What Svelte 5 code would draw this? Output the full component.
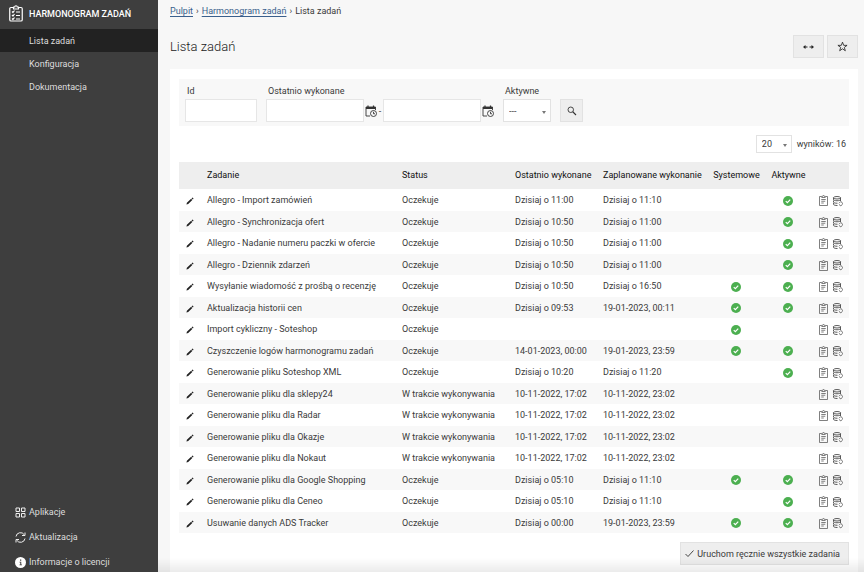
<script>
  const rows = [
    { name: 'Allegro - Import zamówień', status: 'Oczekuje', last: 'Dzisiaj o 11:00', next: 'Dzisiaj o 11:10', system: false, active: true },
    { name: 'Allegro - Synchronizacja ofert', status: 'Oczekuje', last: 'Dzisiaj o 10:50', next: 'Dzisiaj o 11:00', system: false, active: true },
    { name: 'Allegro - Nadanie numeru paczki w ofercie', status: 'Oczekuje', last: 'Dzisiaj o 10:50', next: 'Dzisiaj o 11:00', system: false, active: true },
    { name: 'Allegro - Dziennik zdarzeń', status: 'Oczekuje', last: 'Dzisiaj o 10:50', next: 'Dzisiaj o 11:00', system: false, active: true },
    { name: 'Wysyłanie wiadomość z prośbą o recenzję', status: 'Oczekuje', last: 'Dzisiaj o 10:50', next: 'Dzisiaj o 16:50', system: true, active: true },
    { name: 'Aktualizacja historii cen', status: 'Oczekuje', last: 'Dzisiaj o 09:53', next: '19-01-2023, 00:11', system: true, active: true },
    { name: 'Import cykliczny - Soteshop', status: 'Oczekuje', last: '', next: '', system: true, active: false },
    { name: 'Czyszczenie logów harmonogramu zadań', status: 'Oczekuje', last: '14-01-2023, 00:00', next: '19-01-2023, 23:59', system: true, active: true },
    { name: 'Generowanie pliku Soteshop XML', status: 'Oczekuje', last: 'Dzisiaj o 10:20', next: 'Dzisiaj o 11:20', system: false, active: true },
    { name: 'Generowanie pliku dla sklepy24', status: 'W trakcie wykonywania', last: '10-11-2022, 17:02', next: '10-11-2022, 23:02', system: false, active: false },
    { name: 'Generowanie pliku dla Radar', status: 'W trakcie wykonywania', last: '10-11-2022, 17:02', next: '10-11-2022, 23:02', system: false, active: false },
    { name: 'Generowanie pliku dla Okazje', status: 'W trakcie wykonywania', last: '10-11-2022, 17:02', next: '10-11-2022, 23:02', system: false, active: false },
    { name: 'Generowanie pliku dla Nokaut', status: 'W trakcie wykonywania', last: '10-11-2022, 17:02', next: '10-11-2022, 23:02', system: false, active: false },
    { name: 'Generowanie pliku dla Google Shopping', status: 'Oczekuje', last: 'Dzisiaj o 05:10', next: 'Dzisiaj o 11:10', system: true, active: true },
    { name: 'Generowanie pliku dla Ceneo', status: 'Oczekuje', last: 'Dzisiaj o 05:10', next: 'Dzisiaj o 11:10', system: false, active: true },
    { name: 'Usuwanie danych ADS Tracker', status: 'Oczekuje', last: 'Dzisiaj o 00:00', next: '19-01-2023, 23:59', system: true, active: true }
  ];

  let perPage = $state('20');
  let active = $state('');
</script>

{#snippet check()}
  <svg class="check" viewBox="0 0 20 20" role="img" aria-label="Tak">
    <circle cx="10" cy="10" r="10" fill="#4caf50" />
    <path d="M5.5 10.3l3.2 3.1 5.8-6" fill="none" stroke="#fff" stroke-width="2.4" />
  </svg>
{/snippet}

{#snippet calendar()}
  <svg class="calendar" viewBox="0 0 24 24" fill="none" stroke="#333" stroke-width="1.8" aria-hidden="true">
    <path d="M10 22H2V4h19v6" />
    <path d="M2 4h19v4H2z" fill="#333" stroke="none" />
    <path d="M6 1v4M17 1v4" stroke-width="2.5" />
    <circle cx="17" cy="17" r="6" />
    <path d="M17 13.5v4h3" />
  </svg>
{/snippet}

<div class="layout">
  <aside class="sidebar">
    <div class="brand">
      <svg viewBox="0 0 28 34" fill="none" stroke="#fff" stroke-width="2.4" stroke-linejoin="round" aria-hidden="true">
        <path d="M8 5H4a2.500 2.500 0 0 0-2.500 2.500v22A2.500 2.500 0 0 0 4 32h20a2.500 2.500 0 0 0 2.500-2.500v-22A2.500 2.500 0 0 0 24 5h-4" />
        <path d="M9 8V4h2.500a2.500 2.500 0 0 1 5 0H19v4z" />
        <path d="M6 13l2 2 3-4M14 14h8M6 20l2 2 3-4M14 21h8M6 27l2 2 3-4M14 28h8" />
      </svg>
      <span>HARMONOGRAM ZADAŃ</span>
    </div>
    <nav class="menu">
      <a href="#lista" class="active">Lista zadań</a>
      <a href="#konfiguracja">Konfiguracja</a>
      <a href="#dokumentacja">Dokumentacja</a>
    </nav>
    <nav class="menu-bottom">
      <a href="#aplikacje">
        <svg viewBox="0 0 22 22" fill="none" stroke="#eee" stroke-width="2" aria-hidden="true">
          <path d="M2 2h7v7H2zM13 2h7v7h-7zM2 13h7v7H2zM13 13h7v7h-7z" />
        </svg>
        Aplikacje
      </a>
      <a href="#aktualizacja">
        <svg viewBox="0 0 22 22" fill="none" stroke="#eee" stroke-width="2" aria-hidden="true">
          <path d="M2 9a9 9 0 0 1 16.500-3.500M20 13a9 9 0 0 1-16.500 3.500" />
          <path d="M20 1v6h-6M2 21v-6h6" />
        </svg>
        Aktualizacja
      </a>
      <a href="#licencja">
        <svg viewBox="0 0 22 22" aria-hidden="true">
          <circle cx="11" cy="11" r="11" fill="#fff" />
          <path d="M10 5h2.500v2.500H10zM9 9.500h3.500V15H14v1.500H9V15h1.500v-4H9z" fill="#444" />
        </svg>
        Informacje o licencji
      </a>
    </nav>
  </aside>

  <main>
    <nav class="breadcrumbs">
      <a href="#pulpit">Pulpit</a>
      <span>›</span>
      <a href="#harmonogram">Harmonogram zadań</a>
      <span>›</span>
      <span>Lista zadań</span>
    </nav>

    <header class="page-header">
      <h1>Lista zadań</h1>
      <div class="actions">
        <button type="button" class="btn" aria-label="Szerokość">
          <svg class="arrows" viewBox="0 0 22 12" aria-hidden="true">
            <path d="M3 6h6M13 6h6" stroke="#222" stroke-width="2" />
            <path d="M0 6l5-4v8zM22 6l-5-4v8z" fill="#222" />
          </svg>
        </button>
        <button type="button" class="btn" aria-label="Ulubione">
          <svg class="star" viewBox="0 0 24 24" fill="none" stroke="#222" stroke-width="1.800" aria-hidden="true">
            <path d="M12 2.500l2.600 7H22l-6 4.500 2.200 7.300L12 17l-6.200 4.300L8 14 2 9.500h7.400z" />
          </svg>
        </button>
      </div>
    </header>

    <section class="panel">
      <form class="filters">
        <div class="field field-id">
          <label for="filter-id">Id</label>
          <input id="filter-id" type="text" />
        </div>
        <div class="field">
          <label for="filter-from">Ostatnio wykonane</label>
          <div class="range">
            <input id="filter-from" type="text" />
            {@render calendar()}
            <span class="dash">-</span>
            <input type="text" aria-label="Ostatnio wykonane do" />
            {@render calendar()}
          </div>
        </div>
        <div class="field">
          <label for="filter-active">Aktywne</label>
          <div class="select">
            <select id="filter-active" bind:value={active}>
              <option value="">---</option>
              <option value="1">Tak</option>
              <option value="0">Nie</option>
            </select>
          </div>
        </div>
        <button type="button" class="btn search" aria-label="Szukaj">
          <svg viewBox="0 0 20 20" fill="none" stroke="#333" stroke-width="1.800" aria-hidden="true">
            <circle cx="7.500" cy="7.500" r="5.500" />
            <path d="M11.500 11.500L18 18" stroke-width="2.200" />
          </svg>
        </button>
      </form>

      <div class="pager">
        <div class="select">
          <select bind:value={perPage} aria-label="Wyników na stronie">
            <option>20</option>
            <option>50</option>
            <option>100</option>
          </select>
        </div>
        <span>wyników: {rows.length}</span>
      </div>

      <table>
        <colgroup>
          <col class="col-edit" />
          <col />
          <col class="col-status" />
          <col class="col-last" />
          <col class="col-next" />
          <col class="col-system" />
          <col class="col-active" />
          <col class="col-tools" />
        </colgroup>
        <thead>
          <tr>
            <th></th>
            <th>Zadanie</th>
            <th>Status</th>
            <th>Ostatnio wykonane</th>
            <th>Zaplanowane wykonanie</th>
            <th class="center">Systemowe</th>
            <th class="center">Aktywne</th>
            <th></th>
          </tr>
        </thead>
        <tbody>
          {#each rows as row}
            <tr>
              <td>
                <button type="button" class="icon-btn edit" aria-label="Edytuj">
                  <svg viewBox="0 0 18 18" fill="#222" aria-hidden="true">
                    <path d="M1 17l1-4L11.500 4l2.700 2.700L5 16zM12.500 3L14.500 1l2.700 2.700-2 2z" />
                  </svg>
                </button>
              </td>
              <td>{row.name}</td>
              <td>{row.status}</td>
              <td>{row.last}</td>
              <td>{row.next}</td>
              <td class="center">
                {#if row.system}{@render check()}{/if}
              </td>
              <td class="center">
                {#if row.active}{@render check()}{/if}
              </td>
              <td>
                <div class="tools">
                  <button type="button" class="icon-btn log" aria-label="Dziennik">
                    <svg viewBox="0 0 18 22" fill="none" stroke="#555" stroke-width="1.500" aria-hidden="true">
                      <path d="M5 3H1v18h16V3h-4" />
                      <path d="M5.500 5V2.500h2a1.500 1.500 0 0 1 3 0h2V5z" />
                      <path d="M4.500 9h9M4.500 12.500h8M4.500 16h5" />
                    </svg>
                  </button>
                  <button type="button" class="icon-btn db" aria-label="Dane">
                    <svg viewBox="0 0 20 20" fill="none" stroke="#333" stroke-width="1.600" aria-hidden="true">
                      <ellipse cx="8" cy="3.500" rx="7" ry="2.500" />
                      <path d="M1 3.500V7c0 1.500 3 2.500 7 2.500s7-1 7-2.500V3.500M1 9v3c0 1.500 3 2.500 8 2.500M1 14v2.500C1 18 4 19 9 19M15 7v3" />
                      <path d="M12 14.500l3.500-3.500 4 3.500-1 1M19 17l-3.500 2.500L12 17" stroke-width="1.400" />
                    </svg>
                  </button>
                </div>
              </td>
            </tr>
          {/each}
        </tbody>
      </table>

      <div class="panel-footer">
        <button type="button" class="btn run">
          <svg viewBox="0 0 18 14" fill="none" stroke="#333" stroke-width="1.800" aria-hidden="true">
            <path d="M1 8l5 5L17 1" />
          </svg>
          Uruchom ręcznie wszystkie zadania
        </button>
      </div>
    </section>
  </main>
  <div class="page-shade"></div>
</div>

<style>
  :global(body) {
    background: #f7f7f7;
  }

  .layout {
    display: flex;
    min-height: 100vh;
    font-family: Roboto, 'Noto Sans', sans-serif;
    font-size: 9px;
    line-height: 12px;
    color: #3a3a3a;
  }

  .layout * {
    box-sizing: border-box;
  }

  .sidebar {
    display: flex;
    flex-direction: column;
    flex: 0 0 158px;
    background: #3e3e3e;
    color: #fff;
  }

  .brand {
    display: flex;
    align-items: center;
    gap: 6px;
    height: 29px;
    padding: 0 9px 2px;
    font-weight: 500;
  }

  .brand svg {
    width: 14px;
    height: 17px;
  }

  .menu a {
    display: block;
    padding: 1px 29px 0;
    line-height: 22px;
    color: #ddd;
    text-decoration: none;
  }

  .menu a.active {
    background: #222;
  }

  .menu-bottom {
    display: flex;
    flex-direction: column;
    gap: 13px;
    margin-top: auto;
    padding: 0 15px 4px;
  }

  .menu-bottom a {
    display: flex;
    align-items: center;
    gap: 3px;
    color: #ddd;
    text-decoration: none;
  }

  .menu-bottom svg {
    width: 11px;
    height: 11px;
  }

  main {
    flex: 1;
    min-width: 0;
    padding: 5px 6px 0 12px;
  }

  .breadcrumbs {
    display: flex;
    gap: 3px;
  }

  .breadcrumbs a {
    color: #3a5f8c;
    text-underline-offset: 2px;
  }

  .page-header {
    display: flex;
    align-items: center;
    justify-content: space-between;
    padding: 18px 0 11px;
  }

  h1 {
    margin: 0;
    font-size: 13px;
    line-height: 16px;
    font-weight: 300;
    color: #222;
  }

  .actions {
    display: flex;
    gap: 3px;
  }

  .btn {
    display: flex;
    align-items: center;
    justify-content: center;
    padding: 0;
    font: inherit;
    color: #3a3a3a;
    background: #eee;
    border: 1px solid #e2e2e2;
    cursor: pointer;
  }

  .actions .btn {
    width: 31px;
    height: 23px;
  }

  .arrows {
    width: 11px;
    height: 6px;
  }

  .star {
    width: 11px;
    height: 11px;
  }

  .panel {
    padding: 10px 9px 7px;
    background: #fff;
  }

  .filters {
    display: flex;
    align-items: flex-end;
    gap: 9px;
    padding: 6px 6px 4px;
    background: #f8f8f8;
  }

  .field {
    display: flex;
    flex-direction: column;
    gap: 2px;
  }

  label {
    padding-left: 2px;
  }

  .field input {
    height: 23px;
    min-width: 0;
    padding: 0 6px;
    font: inherit;
    border: 1px solid #e6e6e6;
    background: #fff;
  }

  .field-id {
    width: 72px;
  }

  .range {
    display: flex;
    align-items: center;
  }

  .range input {
    width: 98px;
  }

  .calendar {
    width: 12px;
    height: 12px;
    margin-left: 1px;
  }

  .dash {
    width: 6px;
    text-align: center;
  }

  .select {
    position: relative;
  }

  .select::after {
    content: '';
    position: absolute;
    right: 5px;
    top: 50%;
    border: 2px solid transparent;
    border-top: 3px solid #777;
    pointer-events: none;
  }

  select {
    display: block;
    appearance: none;
    width: 48px;
    height: 23px;
    padding: 0 5px;
    font: inherit;
    color: #3a3a3a;
    border: 1px solid #e2e2e2;
    border-radius: 0;
    background: #fff;
  }

  .search {
    width: 23px;
    height: 23px;
  }

  .search svg {
    width: 10px;
    height: 10px;
  }

  .pager {
    display: flex;
    align-items: center;
    justify-content: flex-end;
    gap: 5px;
    padding: 9px 3px 9px 0;
  }

  .pager select {
    width: 36px;
    height: 18px;
  }

  table {
    width: 100%;
    table-layout: fixed;
    border-collapse: collapse;
  }

  .col-edit {
    width: 22px;
  }

  .col-status {
    width: 113px;
  }

  .col-last {
    width: 88px;
  }

  .col-next {
    width: 110px;
  }

  .col-system {
    width: 59px;
  }

  .col-active {
    width: 45px;
  }

  .col-tools {
    width: 38px;
  }

  th,
  td {
    padding: 0 0 0 6px;
    text-align: left;
    white-space: nowrap;
  }

  th {
    height: 27px;
    padding-bottom: 1px;
    font-weight: 400;
    color: #111;
    background: #eee;
  }

  td {
    height: 22px;
  }

  tbody tr:nth-child(even) td {
    height: 21px;
    background: #f8f8f8;
  }

  .center {
    padding-left: 0;
    text-align: center;
  }

  td.center {
    padding-right: 1px;
  }

  .check {
    display: block;
    width: 10px;
    height: 10px;
    margin: 1px auto 0;
  }

  .icon-btn {
    display: block;
    padding: 0;
    border: 0;
    background: none;
    cursor: pointer;
  }

  .icon-btn svg {
    display: block;
    overflow: visible;
  }

  .edit svg {
    width: 8px;
    height: 8px;
    margin: 2px 0 0 1px;
  }

  .tools {
    display: flex;
    align-items: center;
    gap: 5px;
    padding: 1px 0 0 2px;
  }

  .log svg {
    width: 9px;
    height: 11px;
  }

  .db svg {
    width: 10px;
    height: 10px;
  }

  .panel-footer {
    display: flex;
    justify-content: flex-end;
    padding-top: 9px;
  }

  .run {
    gap: 3px;
    height: 23px;
    padding: 0 8px 0 4px;
  }

  .run svg {
    width: 9px;
    height: 7px;
  }

  .page-shade {
    position: fixed;
    right: 0;
    bottom: 0;
    left: 158px;
    height: 14px;
    background: linear-gradient(rgba(0, 0, 0, 0), rgba(0, 0, 0, 0.08));
    pointer-events: none;
  }
</style>
